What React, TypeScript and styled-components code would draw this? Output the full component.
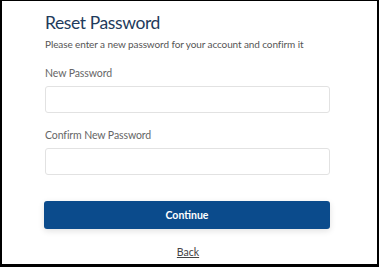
import React from "react";
import styled, { createGlobalStyle } from "styled-components";

const Global = createGlobalStyle`
  html, body { margin: 0; padding: 0; background: #fff; }
  body { font-family: Lato, "Open Sans", sans-serif; }
`;

const Frame = styled.div`
  box-sizing: border-box;
  width: 379px;
  height: 267px;
  border-style: solid;
  border-color: #000;
  border-width: 1px 2px 3px 2px;
  background: #fff;
  padding: 12px 0 0 40px;
  overflow: hidden;
`;

const Column = styled.div`
  width: 288px;
  display: flex;
  flex-direction: column;
`;

const Title = styled.h1`
  margin: 0 0 0 3px;
  font-size: 17.5px;
  font-weight: 400;
  color: #1e3b5c;
  line-height: 20px;
  letter-spacing: -0.4px;
`;

const Subtitle = styled.p`
  margin: 4px 0 0 3px;
  font-size: 10px;
  color: #555;
  line-height: 14px;
  letter-spacing: -0.1px;
`;

const Label = styled.label`
  margin: 15px 0 0 3px;
  font-size: 10.5px;
  color: #666;
  line-height: 14px;
  letter-spacing: -0.1px;
`;

const Input = styled.input`
  box-sizing: border-box;
  margin: 6px 0 0 3px;
  padding: 0 8px;
  width: 285px;
  height: 27px;
  border: 1px solid #e2e2e2;
  border-radius: 3px;
  background: #fff;
  outline: none;
`;

const Button = styled.button`
  box-sizing: border-box;
  margin: 26px 0 0 2px;
  padding: 0;
  width: 286px;
  height: 28px;
  border: none;
  border-radius: 3px;
  background: #0b4b8c;
  color: #fff;
  font-family: Lato, sans-serif;
  font-weight: 700;
  font-size: 10.5px;
  box-shadow: 0 2px 6px rgba(0, 0, 0, 0.12);
  cursor: pointer;
`;

const BackLink = styled.a`
  margin: 16px 0 0 4px;
  align-self: center;
  font-size: 10.5px;
  color: #444;
  text-decoration: underline;
  line-height: 14px;
`;

export default function App() {
  return (
    <>
      <Global />
      <Frame>
        <Column>
          <Title>Reset Password</Title>
          <Subtitle>Please enter a new password for your account and confirm it</Subtitle>
          <Label>New Password</Label>
          <Input type="password" />
          <Label>Confirm New Password</Label>
          <Input type="password" />
          <Button>Continue</Button>
          <BackLink href="#">Back</BackLink>
        </Column>
      </Frame>
    </>
  );
}
